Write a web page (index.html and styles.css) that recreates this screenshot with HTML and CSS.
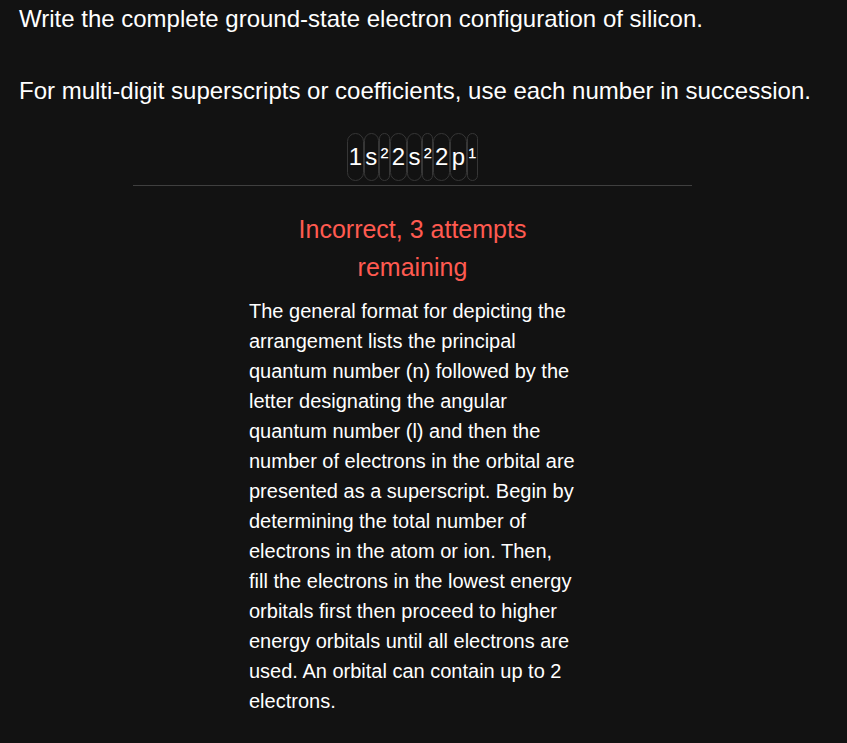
FILE: index.html
```html
<!DOCTYPE html>
<html lang="en">
<head>
<meta charset="utf-8">
<title>Electron configuration</title>
<link rel="stylesheet" href="styles.css">
</head>
<body>
<main class="page">
  <div class="prompt">
    <p>Write the complete ground-state electron configuration of silicon.</p>
    <p>For multi-digit superscripts or coefficients, use each number in succession.</p>
  </div>
  <div class="answer">
    <span class="cell">1</span><span class="cell">s</span><span class="cell">²</span><span class="cell">2</span><span class="cell">s</span><span class="cell">²</span><span class="cell">2</span><span class="cell">p</span><span class="cell">¹</span>
  </div>
  <div class="divider"></div>
  <section class="feedback">
    <p class="status">Incorrect, 3 attempts remaining</p>
    <p class="hint">The general format for depicting the arrangement lists the principal quantum number (n) followed by the letter designating the angular quantum number (l) and then the number of electrons in the orbital are presented as a superscript. Begin by determining the total number of electrons in the atom or ion. Then, fill the electrons in the lowest energy orbitals first then proceed to higher energy orbitals until all electrons are used. An orbital can contain up to 2 electrons.</p>
  </section>
</main>
</body>
</html>
```

FILE: styles.css
```css
html, body {
  margin: 0;
  padding: 0;
  background: #121212;
}

body {
  color: #ffffff;
  font-family: "Liberation Sans", Arial, sans-serif;
}

.page {
  width: 825px;
  box-sizing: border-box;
  padding: 1px 19px 0 19px;
  display: flex;
  flex-direction: column;
  align-items: center;
}

.prompt {
  align-self: stretch;
  margin-right: -20px;
}

.prompt p {
  margin: 0 0 36px 0;
  font-size: 24px;
  line-height: 36px;
}

.prompt p:last-child {
  margin-bottom: 0;
}

.answer {
  margin-top: 24px;
  display: flex;
  justify-content: center;
}

.cell {
  display: inline-flex;
  align-items: center;
  justify-content: center;
  height: 46px;
  padding: 0 0.65px;
  border: 1px solid #363636;
  border-radius: 999px;
  font-size: 24px;
  line-height: 46px;
  color: #ffffff;
}

.divider {
  width: 559px;
  margin-top: 4px;
  border-top: 1px solid #3f3f3f;
}

.feedback {
  width: 327px;
  margin-top: 25px;
}

.status {
  margin: 0;
  font-size: 25px;
  line-height: 37.5px;
  color: #ff5a50;
  text-align: center;
}

.hint {
  margin: 10px 0 0 0;
  font-size: 20px;
  line-height: 30px;
  color: #ffffff;
}
```
